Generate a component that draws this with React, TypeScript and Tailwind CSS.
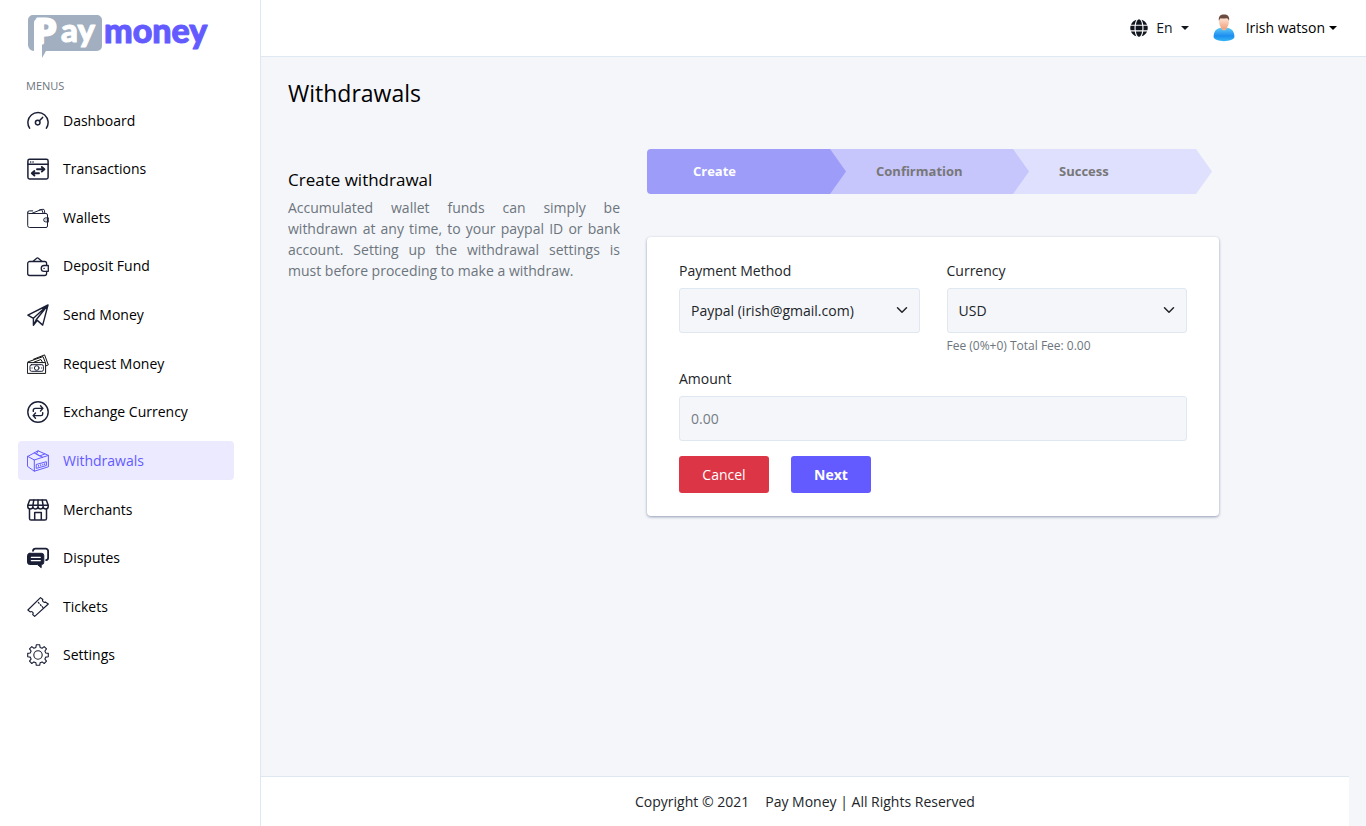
import type { ReactNode } from "react";
import { FaGlobe } from "react-icons/fa";

type MenuItem = {
    label: string;
    icon: ReactNode;
    active?: boolean;
};

function Icon({ children, width = 1.5 }: { children: ReactNode; width?: number }) {
    return (
        <svg
            className="h-[22px] w-[22px] shrink-0"
            viewBox="0 0 22 22"
            fill="none"
            stroke="currentColor"
            strokeWidth={width}
            strokeLinecap="round"
            strokeLinejoin="round"
            aria-hidden="true"
        >
            {children}
        </svg>
    );
}

const menus: MenuItem[] = [
    {
        label: "Dashboard",
        icon: (
            <Icon>
                <path d="M2.6 18.2a10.1 10.1 0 1 1 16.8 0" />
                <circle cx="10.7" cy="12.6" r="2.3" />
                <path d="m12.4 10.8 3.2-3.4" />
            </Icon>
        ),
    },
    {
        label: "Transactions",
        icon: (
            <Icon>
                <rect x="0.9" y="1.3" width="20.2" height="19.6" rx="1.6" />
                <path d="M1 6.3h20" />
                <path d="M3.6 3.9h.1M6 3.9h.1" />
                <path d="M10 11.3h7M14.8 9l2.6 2.3-2.6 2.3M12 15.2H5M7.4 13l-2.6 2.2 2.6 2.3" strokeWidth="1.9" />
            </Icon>
        ),
    },
    {
        label: "Wallets",
        icon: (
            <Icon width={1}>
                <path d="M2 6.5h17A1.5 1.5 0 0 1 20.5 8v11a1.5 1.5 0 0 1-1.5 1.5H2.7a2 2 0 0 1-2-2V5.4a1.6 1.6 0 0 1 1.6-1.5h3.4" />
                <path d="M2 6.5C1 6.3.7 5.8.7 5.2M5 6.3l9.6-3.9 1.6 3.9M12.3 3.1l3.6-.8a1.3 1.3 0 0 1 1.5 1l.4 3" />
                <path d="M21.3 10.9h-2.6a2 2 0 0 0 0 4h2.6zM19 12.9h.1" />
            </Icon>
        ),
    },
    {
        label: "Deposit Fund",
        icon: (
            <Icon width={1.3}>
                <path d="M19.6 10.4V8.500a2 2 0 0 0-2-2H2.7a2 2 0 0 0-2 2v10a2 2 0 0 0 2 2h14.9a2 2 0 0 0 2-2v-2.1" />
                <path d="m6.2 6.3 3.5-3.1a1.2 1.2 0 0 1 1.6 0l3.5 3.1" />
                <path d="M21.3 10.5v5.8h-4.2a2.9 2.9 0 0 1 0-5.8zM17 13.4h.2" />
            </Icon>
        ),
    },
    {
        label: "Send Money",
        icon: (
            <Icon width={1.4}>
                <path d="M21 1 .9 11.1l5.5 3.2v7l3.9-4.9 5.4 4.7zM21 1 6.4 14.3M21 1 9.2 15.7l-2.8 5.6M9.2 15.7l1.1.7" />
            </Icon>
        ),
    },
    {
        label: "Request Money",
        icon: (
            <Icon width={1}>
                <rect x="0.8" y="9.6" width="17.8" height="10.8" stroke="#111" />
                <rect x="3" y="11.7" width="13.4" height="6.6" rx="1.6" />
                <circle cx="9.7" cy="15" r="2.3" />
                <path d="M5 15h.1M14.4 15h.1" />
                <path d="m1 8.9 15-5.3 2.2 5.5M6.6 6.2l11-4.3 3.7 10-2.2.9M7 9.2l6.9-2.7 1.5 2.6" stroke="#111" />
            </Icon>
        ),
    },
    {
        label: "Exchange Currency",
        icon: (
            <Icon width={1.4}>
                <circle cx="11" cy="11" r="10.2" />
                <path d="M6.3 10.4V9.1a1.7 1.7 0 0 1 1.7-1.7h7.7M13.5 4.8l2.4 2.6-2.4 2.6" />
                <path d="M15.7 11.6v1.3a1.7 1.7 0 0 1-1.7 1.7H6.3M8.5 12l-2.4 2.6 2.4 2.6" />
            </Icon>
        ),
    },
    {
        label: "Withdrawals",
        active: true,
        icon: (
            <Icon width={1}>
                <path d="M.8 6.4 7.3 10v11.2L.8 16.6zM.8 6.4 11 .8l10.4 4.6v11.4L7.3 21.2M7.3 10l14.1-4.6" />
                <path d="m7.3 3 8.3 4.3M11 .8l-1.5 3.400 3.400 1.700 5-2" />
                <path d="m9.6 14.4 9.8-2.7v3.8l-9.8 2.8zM11.6 15.4v.9M13.7 14.8v.9M15.8 14.2v.9M17.6 13.7v.9" />
            </Icon>
        ),
    },
    {
        label: "Merchants",
        icon: (
            <Icon width={1.5}>
                <path d="M2.7 1h16.6l1.9 5.3v1.1a2.5 2.5 0 0 1-5.1 0 2.5 2.5 0 0 1-5.1 0 2.5 2.5 0 0 1-5.1 0 2.5 2.5 0 0 1-5.1 0V6.3z" />
                <path d="M1 6.2h20M6.8 1l-.9 5.4M11 1v5.4M15.2 1l.9 5.4" />
                <path d="M2.5 9.8v9.6A1.6 1.6 0 0 0 4.100 21h13.8a1.6 1.6 0 0 0 1.6-1.6V9.8M7.7 21v-7.6h6.6V21" />
            </Icon>
        ),
    },
    {
        label: "Disputes",
        icon: (
            <Icon>
                <path d="M6 3.9a2.5 2.5 0 0 1 2.4-2.3h10.3A2.4 2.4 0 0 1 21.100 4v6.8a2.4 2.4 0 0 1-2 2.4" strokeWidth="1.8" />
                <path
                    d="M2.8 6.3h11.7a2.3 2.3 0 0 1 2.3 2.3v6.6a2.3 2.3 0 0 1-2.3 2.3h-.3v3.2l-3.9-3.2H2.8a2.3 2.3 0 0 1-2.3-2.3V8.6a2.3 2.3 0 0 1 2.3-2.3z"
                    fill="currentColor"
                    strokeWidth="1"
                />
                <path d="M4.3 10.3h9M4.3 13.6h9" stroke="#fff" strokeWidth="1.2" />
            </Icon>
        ),
    },
    {
        label: "Tickets",
        icon: (
            <Icon width={1.2}>
                <path d="m13.5 1.6 2.3 1.9a1.9 1.9 0 0 0 2.5 2.6l3 1.9L7.7 20.4l-2-1.8a1.9 1.9 0 0 0-2.6-2.7L.9 14z" />
                <path d="m11.3 6.4.8.9M13.3 8.6l.8.9M15.2 10.7l.8.9" />
            </Icon>
        ),
    },
    {
        label: "Settings",
        icon: (
            <Icon width={1.1}>
                <circle cx="11" cy="11" r="4.2" />
                <path d="M9.3.8h3.4l.4 2.6 2 .8 2.1-1.6 2.3 2.3-1.6 2.1.9 2 2.5.4v3.3l-2.5.4-.9 2 1.6 2.1-2.3 2.3-2.1-1.6-2 .9-.4 2.5H9.3l-.4-2.5-2-.9-2.1 1.6-2.3-2.3 1.6-2.1-.9-2-2.5-.4V9.4L3.2 9l.9-2-1.6-2.1 2.3-2.3 2.1 1.6 2-.8z" />
            </Icon>
        ),
    },
];

const steps = [
    { label: "Create", style: "z-30 rounded-l bg-[#9d9cf8] text-white" },
    { label: "Confirmation", style: "z-20 bg-[#c6c5fc] text-[#777]" },
    { label: "Success", style: "z-10 bg-[#dfdffe] text-[#777]" },
];

function Logo() {
    return (
        <svg className="h-[44px] w-[182px] overflow-visible" viewBox="0 0 182 44" role="img" aria-label="Paymoney">
            {/* speech bubble with its tail */}
            <path
                d="M6 1h64a5 5 0 0 1 5 5v26a5 5 0 0 1-5 5H19l-4 7V20H7v17a6 6 0 0 1-6-6V6a5 5 0 0 1 5-5z"
                fill="#a1afc0"
            />
            <path d="M7 38V9q0-4 4-4h4v24h-1v9z" fill="#fff" />
            <g fontFamily="Lato, sans-serif" fontWeight="900" strokeLinejoin="round">
                <text x="8" y="29" fontSize="33" fill="#fff" stroke="#fff" strokeWidth="3">
                    P
                </text>
                <text x="34" y="28" fontSize="33" fill="#fff" stroke="#fff" strokeWidth="1">
                    ay
                </text>
                <text x="77" y="29" fontSize="34" fill="#635bff" stroke="#635bff" strokeWidth="1">
                    money
                </text>
            </g>
        </svg>
    );
}

function Avatar() {
    return (
        <svg className="h-[28px] w-[22px]" viewBox="0 0 22 28" aria-hidden="true">
            <defs>
                <linearGradient id="shirt" x1="0" y1="0" x2="0" y2="1">
                    <stop offset="0" stopColor="#5cc8f6" />
                    <stop offset="0.6" stopColor="#1d8df0" />
                    <stop offset="1" stopColor="#35b5f5" />
                </linearGradient>
                <linearGradient id="face" x1="0" y1="0" x2="0" y2="1">
                    <stop offset="0" stopColor="#ffe3d3" />
                    <stop offset="1" stopColor="#f0a07c" />
                </linearGradient>
            </defs>
            <path d="M.6 23c0-5 2-8 6-9h8.8c4 1 6 4 6 9-1 5.5-19.8 5.5-20.8 0z" fill="url(#shirt)" />
            <path d="M7.5 13.5q3.5 6 7 0l-1.5-1H9z" fill="#f3ab8a" />
            <path d="M6.2 4h9.6v4c0 4-2.5 7-4.8 7s-4.8-3-4.8-7z" fill="url(#face)" />
            <path d="M6 7C5 2.500 7.500.6 11 .6S17 2.500 16 7c-.4-1.6-1-2.5-2.5-2.7-2 .2-4 .4-6 0Q6.3 5.500 6 7z" fill="#6b4a40" />
        </svg>
    );
}

function Caret() {
    return (
        <svg className="h-1 w-2" viewBox="0 0 8 4" aria-hidden="true">
            <path d="M0 0h8L4 4z" fill="currentColor" />
        </svg>
    );
}

function Select({ id, label, options }: { id: string; label: string; options: string[] }) {
    return (
        <div>
            <label htmlFor={id} className="block leading-5">
                {label}
            </label>
            <div className="relative mt-[7px]">
                <select
                    id={id}
                    className="h-[45px] w-full appearance-none rounded-[3px] border border-[#dfe7f0] bg-[#f5f6fa] pr-9 pl-[11px]"
                >
                    {options.map((option) => (
                        <option key={option}>{option}</option>
                    ))}
                </select>
                <svg
                    className="pointer-events-none absolute top-4 right-3 h-3 w-3"
                    viewBox="0 0 16 16"
                    fill="none"
                    stroke="#212529"
                    strokeWidth="2"
                    strokeLinecap="round"
                    strokeLinejoin="round"
                    aria-hidden="true"
                >
                    <path d="m2 5 6 6 6-6" />
                </svg>
            </div>
        </div>
    );
}

export default function App() {
    return (
        <div className="flex min-h-screen bg-[#f5f6fa] font-['Open_Sans',sans-serif] text-sm text-[#212529]">
            {/* Sidebar */}
            <aside className="w-[261px] shrink-0 border-r border-[#dfe7f0] bg-white px-[18px] pt-[14px]">
                <a href="#" className="ml-[9px] block w-[182px]">
                    <Logo />
                </a>
                <p className="mt-5 ml-2 text-[11px] leading-4 text-[#6c757d]">MENUS</p>
                <nav className="mt-[7px]">
                    <ul className="flex h-[574px] w-[216px] flex-col justify-between">
                        {menus.map((item) => (
                            <li key={item.label}>
                                <a
                                    href="#"
                                    className={
                                        item.active
                                            ? "flex h-[39px] items-center gap-[14px] rounded bg-[#eceaff] pl-[9px] font-medium text-[#635bff]"
                                            : "flex h-[39px] items-center gap-[14px] rounded pl-[9px] font-medium text-[#1a1f36]"
                                    }
                                >
                                    {item.icon}
                                    <span className={item.active ? "" : "text-black"}>{item.label}</span>
                                </a>
                            </li>
                        ))}
                    </ul>
                </nav>
            </aside>

            <div className="flex min-w-0 grow flex-col">
                {/* Top bar */}
                <header className="flex h-[57px] items-center justify-end gap-6 border-b border-[#dfe7f0] bg-white pr-[29px] text-[#12161f]">
                    <button type="button" className="flex items-center gap-2">
                        <FaGlobe className="h-[18px] w-[18px]" />
                        <span>En</span>
                        <Caret />
                    </button>
                    <button type="button" className="flex items-center gap-1 font-medium text-black">
                        <Avatar />
                        <span className="ml-[7px]">Irish watson</span>
                        <Caret />
                    </button>
                </header>

                {/* Content */}
                <main className="grow pt-[18px] pr-[147px] pl-[27px]">
                    <h1 className="text-[23px] leading-9 font-medium text-black">Withdrawals</h1>

                    <div className="mt-[38px] grid grid-cols-[332fr_572fr] gap-[27px]">
                        <div className="pt-[19px]">
                            <h2 className="text-[17px] leading-6 font-medium text-black">Create withdrawal</h2>
                            <p className="mt-[5px] text-justify leading-[21px] text-[#6c757d]">
                                Accumulated wallet funds can simply be withdrawn at any time, to your paypal ID or
                                bank account. Setting up the withdrawal settings is must&nbsp;before proceding to
                                make a withdraw.
                            </p>
                        </div>

                        <div>
                            <ol className="flex pr-[23px]">
                                {steps.map((step) => (
                                    <li
                                        key={step.label}
                                        className={`relative -mr-4 flex h-[45px] flex-1 items-center pl-[46px] text-[13px] font-bold [clip-path:polygon(0_0,calc(100%-16px)_0,100%_50%,calc(100%-16px)_100%,0_100%)] ${step.style}`}
                                    >
                                        {step.label}
                                    </li>
                                ))}
                            </ol>

                            <form className="mt-[43px] rounded bg-white px-8 pt-6 pb-[23px] shadow-[0_1px_3px_#8f9bb3]">
                                <div className="grid grid-cols-2 gap-[27px]">
                                    <Select
                                        id="method"
                                        label="Payment Method"
                                        options={["Paypal (irish@gmail.com)", "Bank"]}
                                    />
                                    <div>
                                        <Select id="currency" label="Currency" options={["USD", "EUR", "GBP"]} />
                                        <p className="mt-1 text-xs leading-[18px] text-[#6c757d]">
                                            Fee (0%+0) Total Fee: 0.00
                                        </p>
                                    </div>
                                </div>

                                <label htmlFor="amount" className="mt-[14px] block leading-5">
                                    Amount
                                </label>
                                <input
                                    id="amount"
                                    type="text"
                                    placeholder="0.00"
                                    className="mt-[7px] h-[45px] w-full rounded-[3px] border border-[#dfe7f0] bg-[#f5f6fa] px-[11px] placeholder:text-[#757d85]"
                                />

                                <div className="mt-[15px] flex gap-[22px]">
                                    <button type="button" className="h-[37px] w-[90px] rounded-[3px] bg-[#dc3545] text-white">
                                        Cancel
                                    </button>
                                    <button type="submit" className="h-[37px] w-20 rounded-[3px] bg-[#635bff] font-bold text-white">
                                        Next
                                    </button>
                                </div>
                            </form>
                        </div>
                    </div>
                </main>

                {/* Footer */}
                <footer className="mr-[17px] flex h-[50px] items-center justify-center gap-4 border-t border-[#dfe7f0] bg-white">
                    <span>Copyright © 2021</span>
                    <span>Pay Money | All Rights Reserved</span>
                </footer>
            </div>
        </div>
    );
}
